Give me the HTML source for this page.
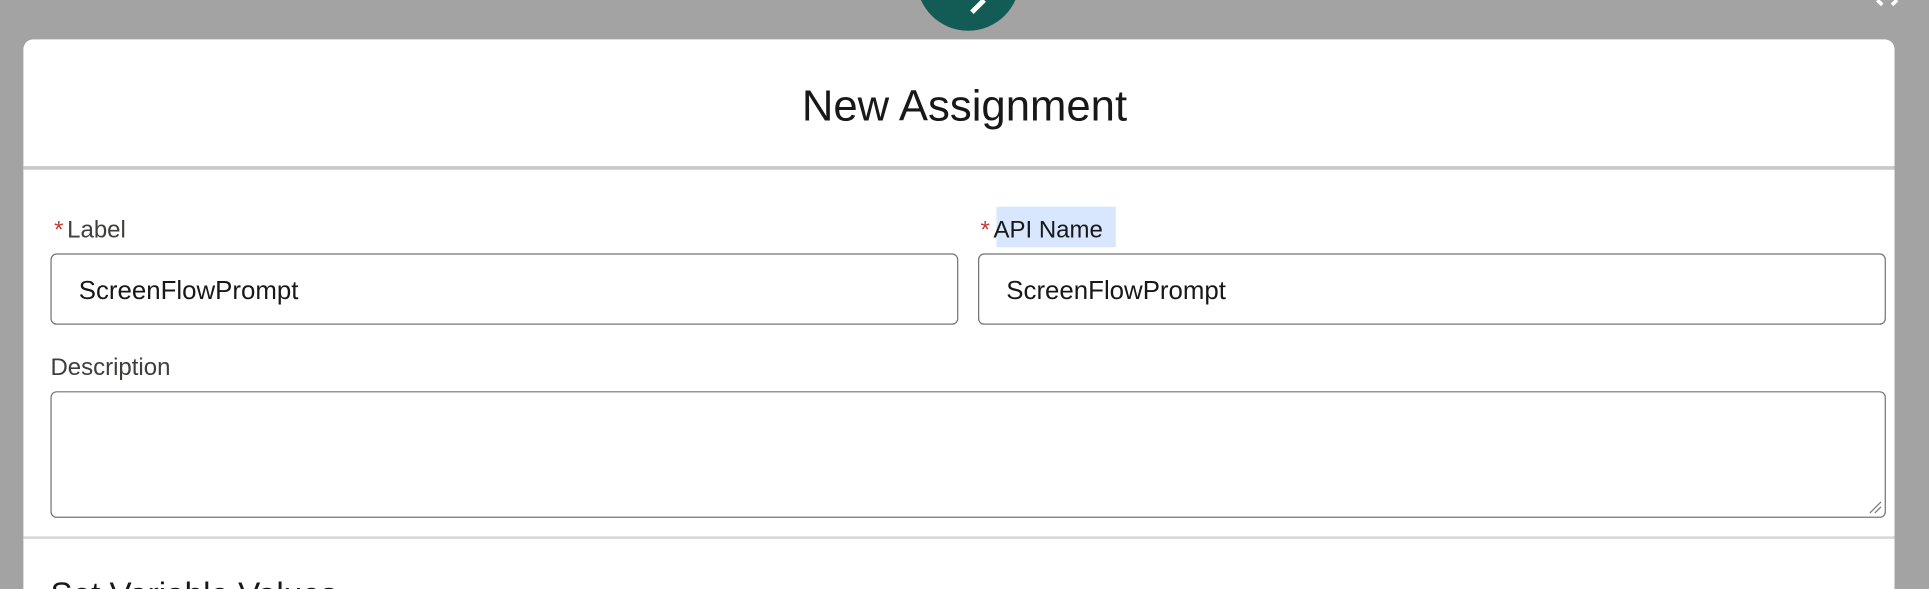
<!DOCTYPE html>
<html><head><meta charset="utf-8"><style>
html,body{margin:0;padding:0;width:1929px;height:589px;overflow:hidden;background:#a3a3a3;}
#s{position:absolute;left:0;top:0;width:1568px;height:479px;transform:scale(1.2302);transform-origin:0 0;font-family:"Segoe UI","Liberation Sans",sans-serif;color:#181818;overflow:hidden;}
.a{position:absolute;}
.circ{left:745px;top:-59px;width:84px;height:84px;border-radius:50%;background:#135b55;}
.modal{left:19px;top:32px;width:1521px;height:500px;background:#fff;border-radius:8px;}
.title{left:0;width:1568px;top:62px;text-align:center;font-size:35.5px;line-height:48px;}
.hr1{left:19px;top:135px;width:1521px;height:3px;background:#c9c9c9;}
.hr2{left:19px;top:436px;width:1521px;height:2px;background:#d4d4d4;}
.lbl{font-size:19.5px;line-height:24px;color:#3e3e3c;}
.req{color:#c23934;margin-right:3px;}
.inp{border:1px solid #747474;border-radius:5px;background:#fff;box-sizing:border-box;}
.val{font-size:21px;line-height:28px;color:#181818;}
</style></head><body><div id="s">
<div class="a circ"></div>
<svg class="a" style="left:770px;top:0" width="40" height="12"><path d="M30 0 L20 10" stroke="#fff" stroke-width="4" fill="none"/></svg>
<svg class="a" style="left:1520px;top:0" width="30" height="8"><path d="M6 0 L10 4 M22 0 L18 4" stroke="#fff" stroke-width="3" fill="none"/></svg>
<div class="a modal"></div>
<div class="a title">New Assignment</div>
<div class="a hr1"></div>
<div class="a lbl" style="left:44px;top:175px"><span class="req">*</span>Label</div>
<div class="a" style="left:810px;top:168px;width:97px;height:33px;background:#d8e6fe"></div>
<div class="a lbl" style="left:797px;top:175px"><span class="req">*</span><span style="color:#181818">API Name</span></div>
<div class="a inp" style="left:41px;top:206px;width:738px;height:58px"></div>
<div class="a val" style="left:64px;top:223px">ScreenFlowPrompt</div>
<div class="a inp" style="left:795px;top:206px;width:738px;height:58px"></div>
<div class="a val" style="left:818px;top:223px">ScreenFlowPrompt</div>
<div class="a lbl" style="left:41px;top:287px">Description</div>
<div class="a inp" style="left:41px;top:318px;width:1492px;height:103px"></div>
<svg class="a" style="left:1518px;top:406px" width="12" height="12"><path d="M2 11 L11 2 M6 11 L11 6" stroke="#777" stroke-width="1"/></svg>
<div class="a hr2"></div>
<div class="a" style="left:41px;top:458px;font-size:27px;line-height:34px;color:#181818;padding-top:8px">Set Variable Values</div>
</div></body></html>
